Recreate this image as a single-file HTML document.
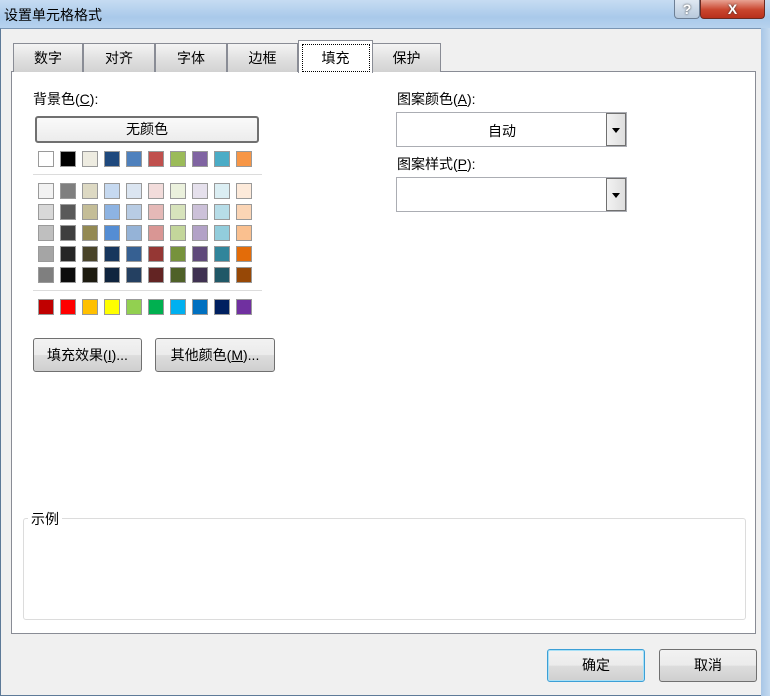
<!DOCTYPE html>
<html><head><meta charset="utf-8"><style>
*{box-sizing:border-box;margin:0;padding:0}
body{width:770px;height:696px;position:relative;overflow:hidden;background:#f0f0f0;font-family:"Liberation Sans","Noto Sans CJK SC",sans-serif;font-size:14px;color:#000}
.a{position:absolute}
.title{left:0;top:0;width:770px;height:29px;background:linear-gradient(#c6dcf2,#a9c9ea 60%,#b8d3ee);}
.frame{left:0;top:28px;width:762px;height:668px;border:1px solid #5d7a98;border-top:1px solid #7a95b3;background:#f0f0f0}
.rframe{left:761px;top:28px;width:9px;height:668px;background:linear-gradient(90deg,#a8c6e6,#c4daf0)}
.tab{top:43px;height:29px;border:1px solid #898c95;border-bottom:none;background:linear-gradient(#f4f4f4,#dedede 60%,#d2d2d2);text-align:center;line-height:28px;font-size:14px}
.panel{left:11px;top:71px;width:745px;height:563px;background:#fff;border:1px solid #898c95}
.sw{width:16px;height:16px;border:1px solid #9a9a9a}
.sep{left:33px;width:229px;height:1px;background:#dcdcdc}
.btn{border:1px solid #707070;border-radius:3px;background:linear-gradient(#f2f2f2,#ebebeb 50%,#dddddd 51%,#cfcfcf);text-align:center;font-size:14px}
.dd{left:396px;width:231px;height:35px;border:1px solid #abadb3;background:#fff}
.arr{right:0;top:0;width:20px;height:33px;border:1px solid #707070;background:linear-gradient(90deg,#f2f2f2,#dedede)}
.arr:after{content:"";position:absolute;left:5px;top:14px;border-left:4px solid transparent;border-right:4px solid transparent;border-top:5px solid #000}
</style></head><body>
<div class="a title"></div>
<div class="a" style="left:4px;top:5px;font-size:14px">设置单元格格式</div>
<div class="a" style="left:674px;top:0;width:26px;height:19px;border:1px solid #6d7f95;border-top:none;border-radius:0 0 4px 4px;background:linear-gradient(#dfe8f2,#b8c9dc);text-align:center;color:#fff;font-weight:bold;font-size:14px;line-height:18px;text-shadow:0 0 2px #333">?</div>
<div class="a" style="left:700px;top:0;width:65px;height:19px;border:1px solid #6b2a22;border-top:none;border-radius:0 0 4px 4px;background:linear-gradient(#e8a393,#c9452e 55%,#b8301c);text-align:center;color:#fff;font-weight:bold;font-size:14px;line-height:18px;text-shadow:0 0 2px #333">X</div>
<div class="a frame"></div>
<div class="a rframe"></div>
<div class="a panel"></div>
<div class="a tab" style="left:13px;width:70px">数字</div>
<div class="a tab" style="left:83px;width:72px">对齐</div>
<div class="a tab" style="left:155px;width:72px">字体</div>
<div class="a tab" style="left:227px;width:71px">边框</div>
<div class="a tab" style="left:372px;width:69px">保护</div>
<div class="a" style="left:298px;top:40px;width:75px;height:33px;border:1px solid #898c95;border-bottom:none;background:#fff;text-align:center;line-height:34px"><span style="display:inline-block;border:1px dotted #000;width:68px;height:28px;line-height:26px;margin-top:3px;vertical-align:top">填充</span></div>
<div class="a" style="left:33px;top:89px">背景色(<u>C</u>):</div>
<div class="a btn" style="left:35px;top:116px;width:224px;height:27px;border:2px solid #707070;line-height:23px;background:linear-gradient(#fafafa,#ececec)">无颜色</div>
<div class="a sep" style="top:174px"></div>
<div class="a sep" style="top:290px"></div>
<div id="g"></div>
<div class="a btn" style="left:33px;top:338px;width:109px;height:34px;line-height:32px">填充效果(<u>I</u>)...</div>
<div class="a btn" style="left:155px;top:338px;width:120px;height:34px;line-height:32px">其他颜色(<u>M</u>)...</div>
<div class="a" style="left:397px;top:89px">图案颜色(<u>A</u>):</div>
<div class="a dd" style="top:112px"><div style="position:absolute;left:0;width:210px;text-align:center;top:8px">自动</div><div class="a arr"></div></div>
<div class="a" style="left:397px;top:154px">图案样式(<u>P</u>):</div>
<div class="a dd" style="top:177px"><div class="a arr"></div></div>
<div class="a" style="left:23px;top:518px;width:723px;height:102px;border:1px solid #dcdcdc;border-radius:3px"></div>
<div class="a" style="left:28px;top:509px;background:#fff;padding:0 3px">示例</div>
<div class="a btn" style="left:547px;top:649px;width:98px;height:33px;line-height:31px;border-color:#3c9fd6;box-shadow:inset 0 0 0 1px #a8e0f6">确定</div>
<div class="a btn" style="left:659px;top:649px;width:98px;height:33px;line-height:31px">取消</div>
<script>
var rows=[[151,["#fff","#000","#eeece1","#1f497d","#4f81bd","#c0504d","#9bbb59","#8064a2","#4bacc6","#f79646"]],
[183,["#f2f2f2","#7f7f7f","#ddd9c3","#c6d9f0","#dbe5f1","#f2dcdb","#ebf1dd","#e5e0ec","#dbeef3","#fdeada"]],
[204,["#d8d8d8","#595959","#c4bd97","#8db3e2","#b8cce4","#e5b9b7","#d7e3bc","#ccc1d9","#b7dde8","#fbd5b5"]],
[225,["#bfbfbf","#3f3f3f","#938953","#548dd4","#95b3d7","#d99694","#c3d69b","#b2a2c7","#92cddc","#fac08f"]],
[246,["#a5a5a5","#262626","#494429","#17365d","#366092","#953734","#76923c","#5f497a","#31859b","#e36c09"]],
[267,["#7f7f7f","#0c0c0c","#1d1b10","#0f243e","#244061","#632423","#4f6128","#3f3151","#205867","#974806"]],
[299,["#c00000","#f00","#ffc000","#ff0","#92d050","#00b050","#00b0f0","#0070c0","#002060","#7030a0"]]];
var h="";rows.forEach(function(r){r[1].forEach(function(c,i){h+='<div class="a sw" style="left:'+(38+22*i)+'px;top:'+r[0]+'px;background:'+c+'"></div>'})});
document.getElementById("g").innerHTML=h;
</script>
</body></html>
